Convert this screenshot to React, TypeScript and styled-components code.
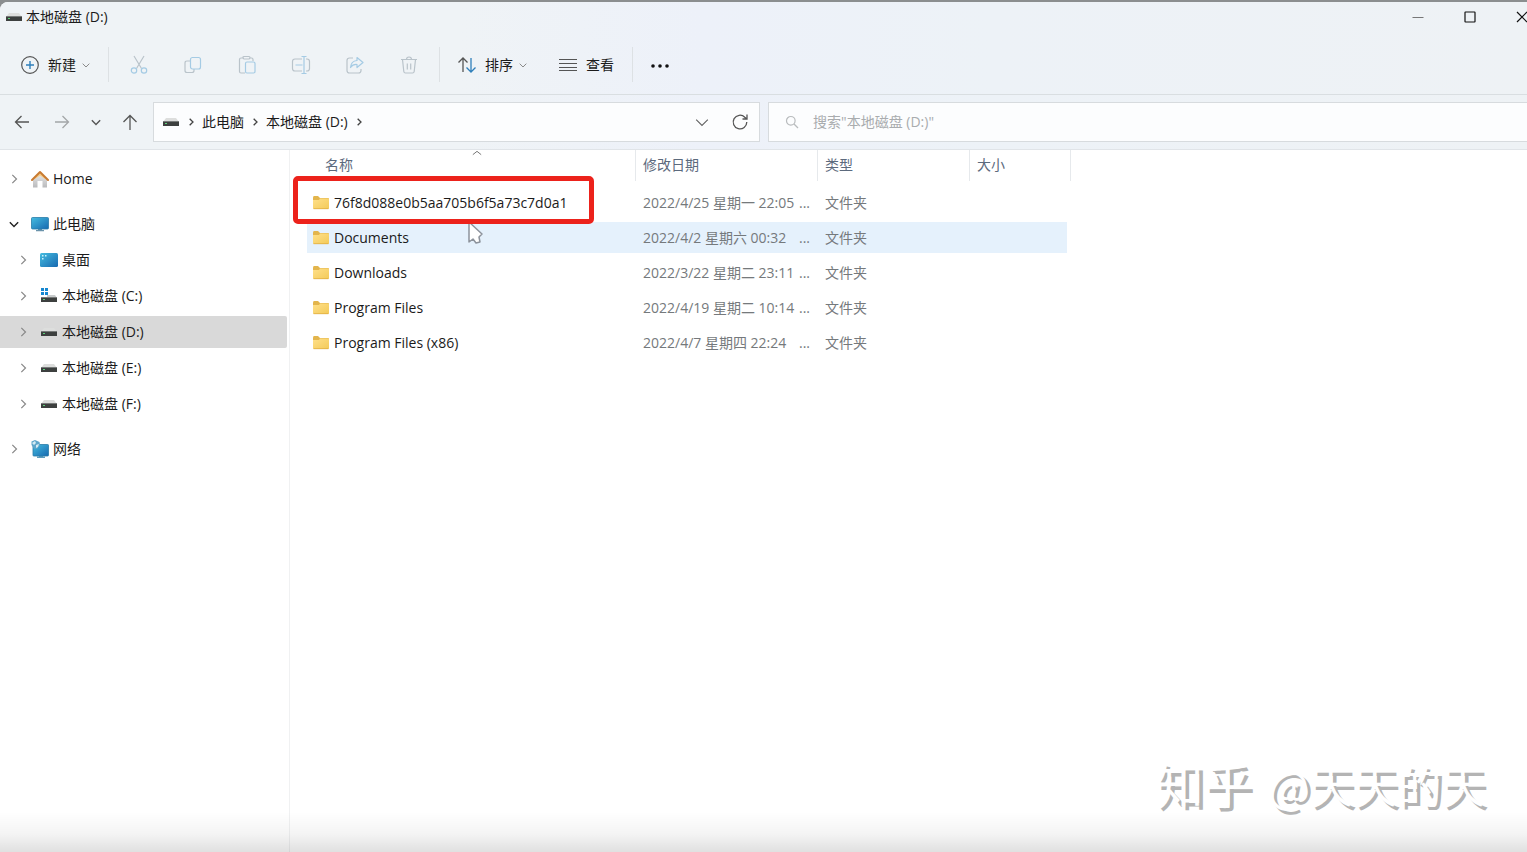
import React from "react";
import styled, { createGlobalStyle } from "styled-components";

const GlobalStyle = createGlobalStyle`
  * { box-sizing: border-box; }
  html { background: #8b8e8f; }
  body {
    margin: 0;
    font-family: "Open Sans", "Noto Sans CJK SC", sans-serif;
    font-size: 14px;
    line-height: 20px;
    color: #1b1b1b;
    overflow-x: hidden;
  }
  button, input { font: inherit; color: inherit; border: 0; background: none; padding: 0; margin: 0; }
  a { color: inherit; text-decoration: none; }
  svg { display: block; flex: none; }
`;

const Window = styled.div`
  position: relative;
  min-height: calc(100vh - 2px);
  margin-top: 2px;
  display: flex;
  flex-direction: column;
  overflow: hidden;
  border-top-left-radius: 8px;
  background: #fff;
`;

const Chrome = styled.header`
  background: linear-gradient(90deg, #eff3f6 0%, #eff3f6 30%, #edf1f9 46%, #edf2f7 65%, #eef2f5 100%);
`;

const TitleBar = styled.div`
  display: flex;
  align-items: center;
  gap: 3px;
  height: 33px;
  padding: 0 0 3px 5px;
`;

const Title = styled.h1`
  flex: 1;
  margin: 0;
  font-size: 14px;
  line-height: 20px;
  font-weight: 400;
`;

const WindowControls = styled.div`
  display: flex;
  margin-right: -21px;
`;

const ControlButton = styled.button`
  display: grid;
  place-items: center;
  width: 52px;
  height: 30px;
`;

const Toolbar = styled.div`
  display: flex;
  align-items: center;
  height: 60px;
  padding: 0 20px;
  border-bottom: 1px solid #d9dee1;
`;

const CommandButton = styled.button`
  display: flex;
  align-items: center;
  gap: 8px;
  margin-right: 18px;
`;

const CommandLabel = styled.span`
  display: flex;
  align-items: center;
  gap: 6px;
`;

const SortGroup = styled.div`
  display: flex;
  gap: 13px;
  padding-left: 17px;
`;

const ToolGroup = styled.div`
  display: flex;
  padding: 0 3px;
`;

const ToolButton = styled.button`
  display: grid;
  place-items: center;
  width: 54px;
  height: 40px;
`;

const Divider = styled.span`
  width: 1px;
  height: 35px;
  background: #dde1e4;
`;

const NavBar = styled.div`
  display: flex;
  align-items: center;
  height: 55px;
  border-bottom: 1px solid #e0e4e8;
`;

const NavButtons = styled.div`
  display: flex;
  flex: none;
  padding: 0 3px 0 2px;
`;

const NavButton = styled.button<{ $narrow?: boolean }>`
  display: grid;
  place-items: center;
  width: ${(p) => (p.$narrow ? 28 : 40)}px;
  height: 40px;
`;

const Fields = styled.div`
  flex: 1;
  display: grid;
  grid-template-columns: minmax(0, 4fr) minmax(0, 5fr);
  gap: 8px;
`;

const AddressBar = styled.nav`
  display: flex;
  align-items: center;
  height: 40px;
  padding: 0 8px;
  border: 1px solid #d7dbde;
  background: #fcfdfe;
`;

const Crumb = styled.a`
  white-space: nowrap;
`;

const CrumbArrow = styled.span`
  display: grid;
  place-items: center;
  width: 22px;
`;

const Spacer = styled.span`
  flex: 1;
`;

const AddressButton = styled.button`
  display: grid;
  place-items: center;
  width: 38px;
  height: 36px;
  &:last-child { width: 22px; margin-left: 8px; }
`;

const SearchBox = styled.label`
  display: flex;
  align-items: center;
  gap: 14px;
  height: 40px;
  padding-left: 16px;
  border: 1px solid #d7dbde;
  border-right: 0;
  background: #fcfdfe;
`;

const SearchInput = styled.input`
  flex: 1;
  min-width: 0;
  outline: none;
  &::placeholder { color: #a9acae; opacity: 1; }
`;

const Body = styled.div`
  display: flex;
  flex: 1;
`;

const Sidebar = styled.nav`
  flex: none;
  width: 290px;
  padding: 13px 2px 0 0;
  border-right: 1px solid #f0f1f2;
`;

const TreeGroup = styled.ul`
  display: grid;
  gap: 4px;
  list-style: none;
  margin: 0 0 13px;
  padding: 0;
`;

const TreeRow = styled.li<{ $child?: boolean; $active?: boolean }>`
  display: flex;
  align-items: center;
  gap: 9px;
  height: 32px;
  padding-left: ${(p) => (p.$child ? 15 : 6)}px;
  border-radius: 0 2px 2px 0;
  background: ${(p) => (p.$active ? "#d9d9d9" : "transparent")};
`;

const TreeToggle = styled.button`
  display: grid;
  place-items: center;
  width: 16px;
  height: 24px;
`;

const TreeLink = styled.a`
  display: flex;
  align-items: center;
  gap: 4px;
`;

const Main = styled.main`
  flex: 1;
  min-width: 0;
  padding-left: 17px;
`;

const FileTable = styled.table`
  width: 764px;
  margin-top: -4px;
  table-layout: fixed;
  border-collapse: separate;
  border-spacing: 0 4px;
`;

const HeadCell = styled.th<{ $width: number }>`
  position: relative;
  width: ${(p) => p.$width}px;
  height: 33px;
  padding: 0;
  vertical-align: top;
  font-weight: 400;
  color: #5c6a7d;
`;

const SortButton = styled.button<{ $first?: boolean }>`
  display: block;
  width: 100%;
  height: 31px;
  padding: 0 0 2px ${(p) => (p.$first ? 18 : 7)}px;
  text-align: left;
  border-right: 1px solid #e6e9ec;
`;

const SortMark = styled.span`
  position: absolute;
  top: -2px;
  left: 165px;
`;

const FileRow = styled.tr<{ $hover?: boolean }>`
  td {
    position: relative;
    height: 31px;
    padding: 0 0 0 7px;
    background: ${(p) => (p.$hover ? "#e5f1fc" : "transparent")};
    background-clip: padding-box;
    color: #75797c;
    white-space: nowrap;
  }
  td:first-child { padding-left: 5px; color: #1b1b1b; }
  td:last-child { border-right: 4px solid transparent; }
`;

const FileName = styled.a`
  display: flex;
  align-items: center;
  gap: 4px;
`;

const DateText = styled.span`
  display: flex;
  justify-content: space-between;
  padding-right: 8px;
`;

const Highlight = styled.span`
  position: absolute;
  z-index: 3;
  left: -14px;
  top: -11px;
  width: 301px;
  height: 48px;
  border: 5px solid #ec221b;
  border-radius: 5px;
  pointer-events: none;
`;

const Pointer = styled.span`
  position: absolute;
  z-index: 2;
  left: 160px;
  top: 33px;
`;

const BottomShade = styled.div`
  position: absolute;
  inset: auto 0 0;
  height: 40px;
  background: linear-gradient(rgba(0, 0, 0, 0), rgba(0, 0, 0, 0.045) 55%, rgba(0, 0, 0, 0.12));
  pointer-events: none;
`;

const Watermark = styled.div`
  position: absolute;
  right: 42px;
  bottom: 36px;
  display: flex;
  align-items: baseline;
  gap: 16px;
  font-family: "Noto Sans CJK SC", sans-serif;
  font-size: 44px;
  line-height: 64px;
  color: #fff;
  text-shadow: 4px 4px 0 #b4b4b4;
`;

const WatermarkSite = styled.span`
  font-size: 48px;
`;

type ChevronProps = { dir: "right" | "down" | "up"; size?: number; color?: string; weight?: number };

function Chevron({ dir, size = 12, color = "#777", weight = 1.2 }: ChevronProps) {
  const d = { right: "M4 1l5 5-5 5", down: "M1 4l5 5 5-5", up: "M1 8l5-4 5 4" }[dir];
  return (
    <svg width={size} height={size} viewBox="0 0 12 12" fill="none" stroke={color} strokeWidth={weight * 12 / size}>
      <path d={d} />
    </svg>
  );
}

function DriveIcon({ system }: { system?: boolean }) {
  return (
    <svg width="18" height="18" viewBox="0 0 18 18">
      <path d={system ? "M7 8h8l2 3H7z" : "M4 5h10l3 4H1z"} fill={system ? "#c9cccd" : "#dddedd"} />
      <rect x="1" y={system ? 10 : 8} width="16" height="5" fill="#3d403f" />
      <rect x="1" y={system ? 10 : 8} width="16" height="1" fill="#777a79" />
      <rect x="3" y={system ? 12 : 10} width="2" height="1" fill="#5fd07a" />
      {system && (
        <g fill="#1687d0">
          <rect x="1" y="1" width="3" height="3" />
          <rect x="5" y="1" width="3" height="3" />
          <rect x="1" y="5" width="3" height="3" />
          <rect x="5" y="5" width="3" height="3" />
        </g>
      )}
    </svg>
  );
}

function HomeIcon() {
  return (
    <svg width="18" height="18" viewBox="0 0 18 18">
      <defs>
        <linearGradient id="wall" x1="0" y1="0" x2="0" y2="1">
          <stop offset="0" stopColor="#eeeeee" />
          <stop offset="1" stopColor="#b9babc" />
        </linearGradient>
      </defs>
      <path d="M2 8l7-6 7 6v9.500h-4.500V11h-5v6.500H2z" fill="url(#wall)" />
      <path d="M4 7l5-4 5 4v2L9 5.500 4 9z" fill="#f6ca85" />
      <path d="M1 10l8-8 8 8" fill="none" stroke="#c97b32" strokeWidth="2" strokeLinejoin="round" strokeLinecap="round" />
    </svg>
  );
}

function Blue() {
  return (
    <linearGradient id="screen" x1="0" y1="0" x2="1" y2="1">
      <stop offset="0" stopColor="#45bce0" />
      <stop offset="1" stopColor="#1769b0" />
    </linearGradient>
  );
}

function MonitorIcon() {
  return (
    <svg width="18" height="18" viewBox="0 0 18 18">
      <defs><Blue /></defs>
      <path d="M7 13h4v2h2v1.200H5V15h2z" fill="#6b93ab" />
      <rect x="0.500" y="2.500" width="17" height="11.500" rx="1" fill="url(#screen)" stroke="#2a7ca8" strokeWidth="0.800" />
    </svg>
  );
}

function DesktopIcon() {
  return (
    <svg width="18" height="18" viewBox="0 0 18 18">
      <rect x="0" y="2" width="18" height="14" rx="1.500" fill="url(#screen)" />
      <path d="M2 4h1.500v1.500H2zM2 7h1.500v1.500H2zM5 4h1.500v1.500H5z" fill="#c9f3fb" />
    </svg>
  );
}

function NetworkIcon() {
  return (
    <svg width="18" height="18" viewBox="0 0 18 18">
      <path d="M8 15h4v1.500h2V18H6v-1.500h2z" fill="#5c9cbc" />
      <rect x="2" y="4.500" width="15.500" height="11.500" rx="0.800" fill="url(#screen)" stroke="#2a7ca8" strokeWidth="0.800" />
      <path d="M0.500 1.500L4 0l4.500 2 .5 3-3 4-3-.5L0.500 5z" fill="#5fa6cb" />
      <path d="M1 3l3-2 1 2-2 2zM5 5l3-1-1 3-2 1z" fill="#d5ebf3" />
    </svg>
  );
}

function FolderIcon() {
  return (
    <svg width="18" height="18" viewBox="0 0 18 18">
      <defs>
        <linearGradient id="folder" x1="0" y1="0" x2="1" y2="1">
          <stop offset="0" stopColor="#ffe08a" />
          <stop offset="1" stopColor="#f3ca58" />
        </linearGradient>
      </defs>
      <path d="M1 4q0-2 1-2h4l2 2h8q1 0 1 1v4H1z" fill="#e3b54c" />
      <path d="M1 6h6l1-1.500h8q1 0 1 1V14q0 1-1 1H2q-1 0-1-1z" fill="url(#folder)" />
      <path d="M1.500 14.700h15" stroke="#dda93b" strokeWidth="0.700" />
    </svg>
  );
}

const faded = { width: 20, height: 20, viewBox: "0 0 20 20", fill: "none", strokeWidth: 1.2 };
const GREY = "#b9c3ca";
const SKY = "#a5cbe4";

const CutIcon = () => (
  <svg {...faded}>
    <path d="M5 1l7.500 12.500M15 1L7.500 13.500" stroke={GREY} />
    <circle cx="5" cy="15.500" r="2.700" stroke={SKY} />
    <circle cx="15" cy="15.500" r="2.700" stroke={SKY} />
  </svg>
);
const CopyIcon = () => (
  <svg {...faded}>
    <path d="M7 6H4Q2 6 2 8v7.500q0 2 2 2h5q2 0 2-2V14" stroke={GREY} />
    <rect x="7.500" y="2.500" width="10" height="11.500" rx="2" stroke={SKY} />
  </svg>
);
const PasteIcon = () => (
  <svg {...faded}>
    <path d="M8 18H4q-1.500 0-1.500-1.500V4.500Q2.500 3 4 3h2M13 3h1.500Q16 3 16 4.500V6M6 2.500q0-1 1-1h5q1 0 1 1t-1 1.500H7q-1-.500-1-1.500z" stroke={GREY} />
    <rect x="8.500" y="7" width="9.500" height="11" rx="1.500" stroke={SKY} />
  </svg>
);
const RenameIcon = () => (
  <svg {...faded}>
    <path d="M11 4H4Q1.500 4 1.500 6.500v7Q1.500 16 4 16h7M15 4h1q2.500 0 2.500 2.500v7Q18.500 16 16 16h-1" stroke={GREY} />
    <path d="M4.500 10h7M13 2v16M10.500 1.500h5M10.500 18.500h5" stroke={SKY} />
  </svg>
);
const ShareIcon = () => (
  <svg {...faded}>
    <path d="M8 3H4.500Q2 3 2 5.500v10Q2 18 4.500 18h9q2.500 0 2.500-2.500V14" stroke={GREY} />
    <path d="M12 2.500l6 5-6 5V9.500Q8 9 5.500 12.500 6 6 12 5.500z" stroke={SKY} strokeLinejoin="round" />
  </svg>
);
const TrashIcon = () => (
  <svg {...faded} stroke={GREY}>
    <path d="M2 4.500h16M7.500 4.500q0-2.500 2.500-2.500t2.500 2.500M3.500 4.500l1.300 12q.200 1.500 1.700 1.500h7q1.500 0 1.700-1.500l1.300-12M8.300 8.500v6M11.700 8.500v6" />
  </svg>
);

const tools = [
  { label: "剪切", Icon: CutIcon },
  { label: "复制", Icon: CopyIcon },
  { label: "粘贴", Icon: PasteIcon },
  { label: "重命名", Icon: RenameIcon },
  { label: "共享", Icon: ShareIcon },
  { label: "删除", Icon: TrashIcon },
];

type TreeItem = { label: string; icon: React.ReactNode; open?: boolean; child?: boolean; active?: boolean };

const tree: TreeItem[][] = [
  [{ label: "Home", icon: <HomeIcon /> }],
  [
    { label: "此电脑", icon: <MonitorIcon />, open: true },
    { label: "桌面", icon: <DesktopIcon />, child: true },
    { label: "本地磁盘 (C:)", icon: <DriveIcon system />, child: true },
    { label: "本地磁盘 (D:)", icon: <DriveIcon />, child: true, active: true },
    { label: "本地磁盘 (E:)", icon: <DriveIcon />, child: true },
    { label: "本地磁盘 (F:)", icon: <DriveIcon />, child: true },
  ],
  [{ label: "网络", icon: <NetworkIcon /> }],
];

const files = [
  { name: "76f8d088e0b5aa705b6f5a73c7d0a1", date: "2022/4/25 星期一 22:05", marked: true },
  { name: "Documents", date: "2022/4/2 星期六 00:32", hover: true },
  { name: "Downloads", date: "2022/3/22 星期二 23:11" },
  { name: "Program Files", date: "2022/4/19 星期二 10:14" },
  { name: "Program Files (x86)", date: "2022/4/7 星期四 22:24" },
];

const line = { width: 20, height: 20, viewBox: "0 0 20 20", fill: "none", stroke: "#555", strokeWidth: 1.3 };

export default function App() {
  return (
    <>
      <GlobalStyle />
      <Window>
        <Chrome>
          <TitleBar>
            <DriveIcon />
            <Title>本地磁盘 (D:)</Title>
            <WindowControls>
              <ControlButton aria-label="最小化">
                <svg width="12" height="12" viewBox="0 0 12 12" stroke="#777"><path d="M0.500 6.500h11" /></svg>
              </ControlButton>
              <ControlButton aria-label="最大化">
                <svg width="12" height="12" viewBox="0 0 12 12" fill="none" stroke="#111" strokeWidth="1.200"><rect x="1" y="1" width="10" height="10" rx="0.500" /></svg>
              </ControlButton>
              <ControlButton aria-label="关闭">
                <svg width="12" height="12" viewBox="0 0 12 12" stroke="#111" strokeWidth="1.200"><path d="M1 1l10 10M11 1L1 11" /></svg>
              </ControlButton>
            </WindowControls>
          </TitleBar>
          <Toolbar>
            <CommandButton>
              <svg {...line} strokeWidth="1.200">
                <circle cx="10" cy="10" r="8.300" />
                <path d="M10 6v8M6 10h8" stroke="#2f7fba" strokeWidth="1.400" />
              </svg>
              <CommandLabel>新建<Chevron dir="down" size={8} color="#8a8a8a" weight={1} /></CommandLabel>
            </CommandButton>
            <Divider />
            <ToolGroup>
              {tools.map(({ label, Icon }) => (
                <ToolButton key={label} aria-label={label}><Icon /></ToolButton>
              ))}
            </ToolGroup>
            <Divider />
            <SortGroup>
              <CommandButton>
                <svg {...line}>
                  <path d="M6 17V3M1.500 7.500L6 3l4.500 4.500" />
                  <path d="M14 3v14M9.500 12.500L14 17l4.500-4.500" stroke="#2f7fba" />
                </svg>
                <CommandLabel>排序<Chevron dir="down" size={8} color="#8a8a8a" weight={1} /></CommandLabel>
              </CommandButton>
              <CommandButton>
                <svg {...line} strokeWidth="1"><path d="M1 4.500h18M1 8.500h18M1 12.500h18M1 15.500h18" /></svg>
                <CommandLabel>查看</CommandLabel>
              </CommandButton>
            </SortGroup>
            <Divider />
            <ToolButton aria-label="更多">
              <svg width="20" height="20" viewBox="0 0 20 20" fill="#111">
                <circle cx="3" cy="11" r="1.800" /><circle cx="10" cy="11" r="1.800" /><circle cx="17" cy="11" r="1.800" />
              </svg>
            </ToolButton>
          </Toolbar>
          <NavBar>
            <NavButtons>
              <NavButton aria-label="后退"><svg {...line}><path d="M17 10H3.500M9.500 4l-6 6 6 6" /></svg></NavButton>
              <NavButton aria-label="前进"><svg {...line} stroke="#a3a6a8"><path d="M3 10h13.500M10.500 4l6 6-6 6" /></svg></NavButton>
              <NavButton $narrow aria-label="最近位置"><Chevron dir="down" size={10} color="#555" weight={1.4} /></NavButton>
              <NavButton aria-label="上移"><svg {...line}><path d="M10 18V3.500M3.500 10L10 3.500l6.500 6.500" /></svg></NavButton>
            </NavButtons>
            <Fields>
              <AddressBar aria-label="地址">
                <DriveIcon />
                <CrumbArrow><Chevron dir="right" size={8} color="#444" weight={1.3} /></CrumbArrow>
                <Crumb href="#">此电脑</Crumb>
                <CrumbArrow><Chevron dir="right" size={8} color="#444" weight={1.3} /></CrumbArrow>
                <Crumb href="#">本地磁盘 (D:)</Crumb>
                <CrumbArrow><Chevron dir="right" size={8} color="#444" weight={1.3} /></CrumbArrow>
                <Spacer />
                <AddressButton aria-label="历史记录"><Chevron dir="down" size={14} color="#666" weight={1.2} /></AddressButton>
                <AddressButton aria-label="刷新">
                  <svg {...line}><path d="M16.800 10a6.800 6.800 0 1 1-2-4.800l2 1.800M17 2.500V7h-4.500" /></svg>
                </AddressButton>
              </AddressBar>
              <SearchBox>
                <svg width="14" height="14" viewBox="0 0 14 14" fill="none" stroke="#b9bcbe" strokeWidth="1.200">
                  <circle cx="5.800" cy="5.800" r="4.300" /><path d="M9 9l4 4" />
                </svg>
                <SearchInput type="text" aria-label="搜索" placeholder={'搜索"本地磁盘 (D:)"'} />
              </SearchBox>
            </Fields>
          </NavBar>
        </Chrome>
        <Body>
          <Sidebar aria-label="导航窗格">
            {tree.map((group, i) => (
              <TreeGroup key={i}>
                {group.map((item) => (
                  <TreeRow key={item.label} $child={item.child} $active={item.active}>
                    <TreeToggle aria-label={`展开 ${item.label}`}>
                      {item.open
                        ? <Chevron dir="down" size={10} color="#222" weight={1.4} />
                        : <Chevron dir="right" size={10} color="#888" weight={1.2} />}
                    </TreeToggle>
                    <TreeLink href="#">{item.icon}{item.label}</TreeLink>
                  </TreeRow>
                ))}
              </TreeGroup>
            ))}
          </Sidebar>
          <Main>
            <FileTable>
              <thead>
                <tr>
                  <HeadCell $width={329}>
                    <SortButton $first>名称</SortButton>
                    <SortMark><Chevron dir="up" size={10} color="#777" weight={1} /></SortMark>
                  </HeadCell>
                  <HeadCell $width={182}><SortButton>修改日期</SortButton></HeadCell>
                  <HeadCell $width={152}><SortButton>类型</SortButton></HeadCell>
                  <HeadCell $width={101}><SortButton>大小</SortButton></HeadCell>
                </tr>
              </thead>
              <tbody>
                {files.map((f) => (
                  <FileRow key={f.name} $hover={f.hover}>
                    <td>
                      <FileName href="#"><FolderIcon />{f.name}</FileName>
                      {f.marked && (
                        <>
                          <Highlight />
                          <Pointer>
                            <svg width="17" height="26" viewBox="0 0 17 26">
                              <path d="M2 2v20l4-3 3 4 4-1-1-5 3-3z" fill="#fff" stroke="#8d939c" strokeWidth="1.500" strokeLinejoin="round" />
                            </svg>
                          </Pointer>
                        </>
                      )}
                    </td>
                    <td><DateText><span>{f.date}</span><span>...</span></DateText></td>
                    <td>文件夹</td>
                    <td />
                  </FileRow>
                ))}
              </tbody>
            </FileTable>
          </Main>
        </Body>
        <BottomShade />
        <Watermark><WatermarkSite>知乎</WatermarkSite><span>@天天的天</span></Watermark>
      </Window>
    </>
  );
}
